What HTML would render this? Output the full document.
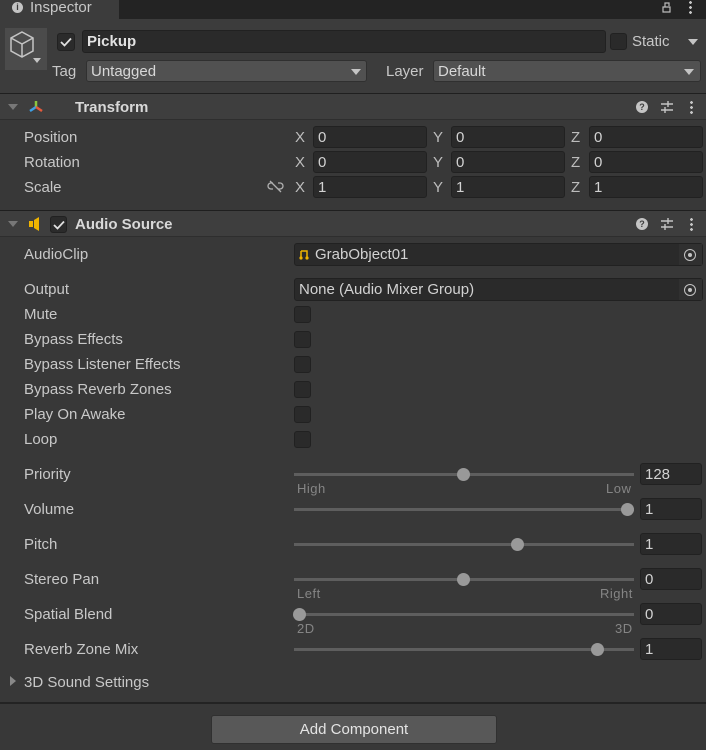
<!DOCTYPE html>
<html><head><style>
*{box-sizing:border-box;margin:0;padding:0}
body{width:706px;height:750px;background:#383838;font-family:"Liberation Sans",sans-serif;font-size:15px;color:#c8c8c8;position:relative;overflow:hidden}
.a{position:absolute}
.t{position:absolute;line-height:24px;white-space:nowrap}
.f{position:absolute;background:#2a2a2a;border:1px solid #212121;border-radius:3px;height:22px;line-height:22px;padding-left:4px;color:#d2d2d2}
.cb{position:absolute;width:17px;height:17px;background:#2a2a2a;border:1px solid #212121;border-radius:3px}
.dd{position:absolute;background:#515151;border:1px solid #303030;border-radius:3px;height:22px;line-height:22px;padding-left:4px;color:#d8d8d8}
.tri{position:absolute;width:0;height:0;border-left:5px solid transparent;border-right:5px solid transparent;border-top:6px solid #c4c4c4}
.trk{position:absolute;left:294px;width:340px;height:3px;background:#5e5e5e}
.kn{position:absolute;width:13px;height:13px;border-radius:50%;background:#999}
.sm{position:absolute;font-size:13px;color:#858585;line-height:16px;letter-spacing:.5px}
.hd{position:absolute;left:0;width:706px;height:27px;background:#3e3e3e;border-top:1px solid #1f1f1f;border-bottom:1px solid #2e2e2e}
.ax{position:absolute;color:#bdbdbd;line-height:24px}
</style></head><body>
<div class="a" style="left:0;top:0;width:706px;height:19px;background:#232323"></div>
<div class="a" style="left:0;top:0;width:119px;height:19px;background:#3c3c3c"></div>
<div class="a" style="left:12px;top:2px;width:11px;height:11px;border-radius:50%;background:#c4c4c4;color:#3c3c3c;font-size:9px;font-weight:bold;text-align:center;line-height:11px">i</div>
<div class="t" style="left:30px;top:-4px;color:#c8c8c8">Inspector</div>
<svg class="a" style="left:660px;top:0" width="14" height="14"><path d="M3 7h7v5H3z M5 7V3h4v3" fill="none" stroke="#bbb" stroke-width="1.2"/></svg>
<div class="a" style="left:689px;top:0;width:3px;height:14px;background:radial-gradient(circle,#c4c4c4 1.3px,transparent 1.5px) 0 0/3px 5px"></div>
<div class="a" style="left:0;top:19px;width:706px;height:74px;background:#3c3c3c"></div>
<div class="a" style="left:5px;top:28px;width:42px;height:42px;background:#4b4b4b"></div>
<svg class="a" style="left:8px;top:30px" width="28" height="30"><path d="M14 2L25 8V21L14 27L3 21V8Z M3 8L14 14L25 8 M14 14V27" fill="none" stroke="#c4c4c4" stroke-width="1.5"/></svg>
<div class="tri" style="left:33px;top:58px;border-left-width:4px;border-right-width:4px;border-top-width:5px"></div>
<div class="cb" style="left:57px;top:33px;width:18px;height:18px;background:#2b2b2b"></div>
<svg class="a" style="left:60px;top:37px" width="12" height="10"><path d="M1 5L4.5 8.5L11 1.5" fill="none" stroke="#e0e0e0" stroke-width="1.8"/></svg>
<div class="f" style="left:82px;top:30px;width:524px;height:23px;font-weight:bold;color:#e2e2e2">Pickup</div>
<div class="cb" style="left:610px;top:33px"></div>
<div class="t" style="left:632px;top:30px">Static</div>
<div class="tri" style="left:688px;top:39px"></div>
<div class="t" style="left:52px;top:60px">Tag</div>
<div class="dd" style="left:86px;top:60px;width:281px">Untagged</div>
<div class="tri" style="left:351px;top:69px"></div>
<div class="t" style="left:386px;top:60px">Layer</div>
<div class="dd" style="left:433px;top:60px;width:268px">Default</div>
<div class="tri" style="left:684px;top:69px"></div>
<div class="hd" style="top:93px"></div>
<div class="tri" style="left:8px;top:104px;border-top-color:#777"></div>
<svg class="a" style="left:26px;top:99px" width="20" height="16"><path d="M10 2V8" stroke="#8cc63f" stroke-width="2.5"/><path d="M10 8L4 12" stroke="#3ea0e6" stroke-width="2.5"/><path d="M10 8L16 12" stroke="#e45a3c" stroke-width="2.5"/></svg>
<div class="t" style="left:75px;top:96px;font-weight:bold;color:#d8d8d8">Transform</div>
<div class="a" style="left:636px;top:101px;width:12px;height:12px;border-radius:50%;background:#c4c4c4;color:#3e3e3e;font-size:9px;font-weight:bold;text-align:center;line-height:12px">?</div>
<svg class="a" style="left:660px;top:100px" width="14" height="14"><path d="M1 4H13M1 10H13M8 1V7M5 7V13" stroke="#c4c4c4" stroke-width="1.4"/></svg>
<div class="a" style="left:690px;top:100px;width:3px;height:14px;background:radial-gradient(circle,#c4c4c4 1.3px,transparent 1.5px) 0 0/3px 5px"></div>
<div class="t" style="left:24px;top:126px">Position</div>
<div class="t" style="left:24px;top:151px">Rotation</div>
<div class="t" style="left:24px;top:176px">Scale</div>
<svg class="a" style="left:267px;top:180px" width="18" height="14"><path d="M6 3H4a3 3 0 0 0 0 6h2M11 3h2a3 3 0 0 1 0 6h-2M3 1L14 12" fill="none" stroke="#b0b0b0" stroke-width="1.3"/></svg>
<div class="ax" style="left:295px;top:126px">X</div><div class="f" style="left:313px;top:126px;width:114px">0</div>
<div class="ax" style="left:433px;top:126px">Y</div><div class="f" style="left:451px;top:126px;width:114px">0</div>
<div class="ax" style="left:571px;top:126px">Z</div><div class="f" style="left:589px;top:126px;width:114px">0</div>
<div class="ax" style="left:295px;top:151px">X</div><div class="f" style="left:313px;top:151px;width:114px">0</div>
<div class="ax" style="left:433px;top:151px">Y</div><div class="f" style="left:451px;top:151px;width:114px">0</div>
<div class="ax" style="left:571px;top:151px">Z</div><div class="f" style="left:589px;top:151px;width:114px">0</div>
<div class="ax" style="left:295px;top:176px">X</div><div class="f" style="left:313px;top:176px;width:114px">1</div>
<div class="ax" style="left:433px;top:176px">Y</div><div class="f" style="left:451px;top:176px;width:114px">1</div>
<div class="ax" style="left:571px;top:176px">Z</div><div class="f" style="left:589px;top:176px;width:114px">1</div>
<div class="hd" style="top:210px"></div>
<div class="tri" style="left:8px;top:221px;border-top-color:#777"></div>
<svg class="a" style="left:28px;top:216px" width="14" height="16"><path d="M1 5H5V11H1Z" fill="#f0b400"/><path d="M6 4L11 1V15L6 12Z" fill="#f0b400"/></svg>
<div class="cb" style="left:50px;top:216px;width:17px;height:17px;background:#2b2b2b"></div>
<svg class="a" style="left:53px;top:220px" width="12" height="10"><path d="M1 5L4.5 8.5L11 1.5" fill="none" stroke="#e0e0e0" stroke-width="1.8"/></svg>
<div class="t" style="left:75px;top:213px;font-weight:bold;color:#d8d8d8">Audio Source</div>
<div class="a" style="left:636px;top:218px;width:12px;height:12px;border-radius:50%;background:#c4c4c4;color:#3e3e3e;font-size:9px;font-weight:bold;text-align:center;line-height:12px">?</div>
<svg class="a" style="left:660px;top:217px" width="14" height="14"><path d="M1 4H13M1 10H13M8 1V7M5 7V13" stroke="#c4c4c4" stroke-width="1.4"/></svg>
<div class="a" style="left:690px;top:217px;width:3px;height:14px;background:radial-gradient(circle,#c4c4c4 1.3px,transparent 1.5px) 0 0/3px 5px"></div>
<div class="t" style="left:24px;top:243px">AudioClip</div>
<div class="f" style="left:294px;top:243px;width:409px;height:23px;padding-left:20px">GrabObject01</div>
<svg class="a" style="left:299px;top:249px" width="10" height="11"><path d="M2 2H8V9M2 2V9" fill="none" stroke="#f0b400" stroke-width="1.5"/><circle cx="2" cy="9" r="1.6" fill="#f0b400"/><circle cx="8" cy="9" r="1.6" fill="#f0b400"/></svg>
<div class="a" style="left:679px;top:244px;width:23px;height:21px;background:#303030"></div>
<div class="a" style="left:684px;top:249px;width:12px;height:12px;border:1.5px solid #c4c4c4;border-radius:50%"></div><div class="a" style="left:688px;top:253px;width:4px;height:4px;border-radius:50%;background:#c4c4c4"></div>
<div class="t" style="left:24px;top:278px">Output</div>
<div class="f" style="left:294px;top:278px;width:409px;height:23px">None (Audio Mixer Group)</div>
<div class="a" style="left:679px;top:279px;width:23px;height:21px;background:#303030"></div>
<div class="a" style="left:684px;top:284px;width:12px;height:12px;border:1.5px solid #c4c4c4;border-radius:50%"></div><div class="a" style="left:688px;top:288px;width:4px;height:4px;border-radius:50%;background:#c4c4c4"></div>
<div class="t" style="left:24px;top:303px">Mute</div><div class="cb" style="left:294px;top:306px"></div>
<div class="t" style="left:24px;top:328px">Bypass Effects</div><div class="cb" style="left:294px;top:331px"></div>
<div class="t" style="left:24px;top:353px">Bypass Listener Effects</div><div class="cb" style="left:294px;top:356px"></div>
<div class="t" style="left:24px;top:378px">Bypass Reverb Zones</div><div class="cb" style="left:294px;top:381px"></div>
<div class="t" style="left:24px;top:403px">Play On Awake</div><div class="cb" style="left:294px;top:406px"></div>
<div class="t" style="left:24px;top:428px">Loop</div><div class="cb" style="left:294px;top:431px"></div>
<div class="t" style="left:24px;top:463px">Priority</div>
<div class="trk" style="top:473px"></div><div class="kn" style="left:457px;top:468px"></div>
<div class="f" style="left:640px;top:463px;width:62px">128</div>
<div class="sm" style="left:297px;top:481px">High</div><div class="sm" style="left:606px;top:481px">Low</div>
<div class="t" style="left:24px;top:498px">Volume</div>
<div class="trk" style="top:508px"></div><div class="kn" style="left:621px;top:503px"></div>
<div class="f" style="left:640px;top:498px;width:62px">1</div>
<div class="t" style="left:24px;top:533px">Pitch</div>
<div class="trk" style="top:543px"></div><div class="kn" style="left:511px;top:538px"></div>
<div class="f" style="left:640px;top:533px;width:62px">1</div>
<div class="t" style="left:24px;top:568px">Stereo Pan</div>
<div class="trk" style="top:578px"></div><div class="kn" style="left:457px;top:573px"></div>
<div class="f" style="left:640px;top:568px;width:62px">0</div>
<div class="sm" style="left:297px;top:586px">Left</div><div class="sm" style="left:600px;top:586px">Right</div>
<div class="t" style="left:24px;top:603px">Spatial Blend</div>
<div class="trk" style="top:613px"></div><div class="kn" style="left:293px;top:608px"></div>
<div class="f" style="left:640px;top:603px;width:62px">0</div>
<div class="sm" style="left:297px;top:621px">2D</div><div class="sm" style="left:615px;top:621px">3D</div>
<div class="t" style="left:24px;top:638px">Reverb Zone Mix</div>
<div class="trk" style="top:648px"></div><div class="kn" style="left:591px;top:643px"></div>
<div class="f" style="left:640px;top:638px;width:62px">1</div>
<div class="a" style="left:10px;top:676px;width:0;height:0;border-top:5px solid transparent;border-bottom:5px solid transparent;border-left:6px solid #888"></div>
<div class="t" style="left:24px;top:671px">3D Sound Settings</div>
<div class="a" style="left:0;top:702px;width:706px;height:2px;background:#232323"></div>
<div class="a" style="left:211px;top:715px;width:286px;height:29px;background:#585858;border:1px solid #303030;border-radius:3px;text-align:center;line-height:28px;color:#e4e4e4">Add Component</div>
</body></html>
